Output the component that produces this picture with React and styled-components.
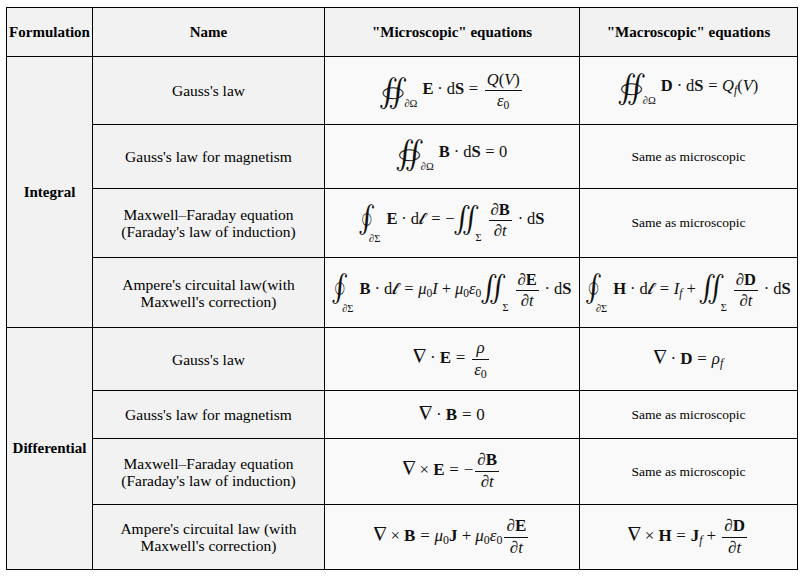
import React from "react";
import styled, { createGlobalStyle } from "styled-components";

const Global = createGlobalStyle`
  html, body { margin: 0; padding: 0; background: #fff; }
  body { font-family: "Liberation Serif", serif; color: #000; }
`;

const Page = styled.div`
  padding: 7px 0 0 6px;
`;

const Table = styled.div`
  display: grid;
  width: max-content;
  grid-template-columns: 85px 231px 254px 217px;
  grid-template-rows: 48px 67px 63px 68px 69px 62px 47px 65px 64px;
  gap: 1px;
  padding: 1px;
  background: #000;
`;

const Cell = styled.div`
  display: flex;
  align-items: center;
  justify-content: center;
  text-align: center;
  background: ${(p) => (p.$light ? "#f9f9f9" : "#f2f2f2")};
  grid-row: ${(p) => (p.$span ? `span ${p.$span}` : "auto")};
  min-width: 0;
  font-family: "Liberation Serif", serif;
  color: #000;
`;

const Head = styled(Cell)`
  font-weight: bold;
  font-size: 15px;
`;

const Formulation = styled(Cell)`
  font-weight: bold;
  font-size: 15px;
`;

const Name = styled(Cell)`
  font-size: 15.5px;
  line-height: 17px;
`;

const Same = styled.span`
  font-size: 13.5px;
`;

const Eq = styled.span`
  display: inline-block;
  font-family: "Liberation Serif", "FreeSerif", serif;
  font-size: ${(p) => p.$size || 16.5}px;
  line-height: 1.2;
  white-space: nowrap;
  color: #111;
`;

const V = styled.span`
  font-weight: bold;
`;

const It = styled.span`
  font-style: italic;
`;

const BI = styled.span`
  font-family: "FreeSerif", serif;
  font-weight: bold;
  font-style: italic;
`;

const Bin = styled.span`
  padding: 0 0.24em;
`;

const Rel = styled.span`
  padding: 0 0.28em;
`;

const Sub = styled.span`
  font-size: 0.7em;
  vertical-align: -0.25em;
  line-height: 0;
`;

const Frac = styled.span`
  display: inline-flex;
  flex-direction: column;
  align-items: stretch;
  vertical-align: middle;
  margin: 0 0.12em;
  line-height: 1.1;
  text-align: center;
`;

const Num = styled.span`
  padding: 0 0.12em 1px;
`;

const Den = styled.span`
  padding: 1px 0.12em 0;
  border-top: 1px solid #111;
`;

const Int = styled.span`
  display: inline-block;
  font-family: "FreeSerif", "DejaVu Serif", serif;
  font-size: ${(p) => p.$size}px;
  font-weight: normal;
  line-height: 1;
  vertical-align: middle;
  letter-spacing: ${(p) => p.$ls || 0}px;
  transform: translateY(${(p) => p.$dy || 0}px) scaleY(${(p) => p.$sy || 1.3});
`;

const Lim = styled.span`
  display: inline-block;
  font-size: 10.5px;
  line-height: 1;
  vertical-align: ${(p) => p.$va};
  margin-right: ${(p) => p.$mr || 4}px;
`;

const Grad = styled.span`
  font-family: "FreeSerif", serif;
  font-size: 1.22em;
  line-height: 1;
`;

const eps0 = (
  <>
    <It>ε</It>
    <Sub>0</Sub>
  </>
);
const mu0 = (
  <>
    <It>μ</It>
    <Sub>0</Sub>
  </>
);

const dS = (
  <>
    d<V>S</V>
  </>
);
const dl = (
  <>
    d<BI>ℓ</BI>
  </>
);

const dOver = (sym) => (
  <Frac>
    <Num>
      ∂<V>{sym}</V>
    </Num>
    <Den>
      ∂<It>t</It>
    </Den>
  </Frac>
);

const Surface = ({ children }) => (
  <>
    <Int $size={26} $sy={1.35} $ls={-2}>∯</Int>
    <Lim $va="-13px" $mr={5}>∂Ω</Lim>
    {children}
  </>
);

const Line = () => (
  <>
    <Int $size={24} $sy={1.4} $dy={-3} $ls={-5}>∮</Int>
    <Lim $va="-18px" $mr={6}>∂Σ</Lim>
  </>
);

const Dbl = () => (
  <>
    <Int $size={24} $sy={1.4} $dy={-3} $ls={-3}>∬</Int>
    <Lim $va="-17px" $mr={5}>Σ</Lim>
  </>
);

export default function App() {
  return (
    <>
      <Global />
      <Page>
        <Table>
          <Head>Formulation</Head>
          <Head>Name</Head>
          <Head>"Microscopic" equations</Head>
          <Head>"Macroscopic" equations</Head>

          <Formulation $span={4}>Integral</Formulation>
          <Name>Gauss's law</Name>
          <Cell $light>
            <Eq>
              <Surface>
                <V>E</V>
                <Bin>·</Bin>
                {dS}
                <Rel>=</Rel>
                <Frac>
                  <Num>
                    <It>Q</It>(<It>V</It>)
                  </Num>
                  <Den>{eps0}</Den>
                </Frac>
              </Surface>
            </Eq>
          </Cell>
          <Cell $light>
            <Eq>
              <Surface>
                <V>D</V>
                <Bin>·</Bin>
                {dS}
                <Rel>=</Rel>
                <It>Q</It>
                <Sub>
                  <It>f</It>
                </Sub>
                (<It>V</It>)
              </Surface>
            </Eq>
          </Cell>

          <Name>Gauss's law for magnetism</Name>
          <Cell $light>
            <Eq>
              <Surface>
                <V>B</V>
                <Bin>·</Bin>
                {dS}
                <Rel>=</Rel>0
              </Surface>
            </Eq>
          </Cell>
          <Cell $light>
            <Same>Same as microscopic</Same>
          </Cell>

          <Name>
            Maxwell–Faraday equation
            <br />
            (Faraday's law of induction)
          </Name>
          <Cell $light>
            <Eq>
              <Line />
              <V>E</V>
              <Bin>·</Bin>
              {dl}
              <Rel>=</Rel>−<Dbl />
              {dOver("B")}
              <Bin>·</Bin>
              {dS}
            </Eq>
          </Cell>
          <Cell $light>
            <Same>Same as microscopic</Same>
          </Cell>

          <Name>
            Ampere's circuital law(with
            <br />
            Maxwell's correction)
          </Name>
          <Cell $light>
            <Eq>
              <Line />
              <V>B</V>
              <Bin>·</Bin>
              {dl}
              <Rel>=</Rel>
              {mu0}
              <It>I</It>
              <Bin>+</Bin>
              {mu0}
              {eps0}
              <Dbl />
              {dOver("E")}
              <Bin>·</Bin>
              {dS}
            </Eq>
          </Cell>
          <Cell $light>
            <Eq>
              <Line />
              <V>H</V>
              <Bin>·</Bin>
              {dl}
              <Rel>=</Rel>
              <It>I</It>
              <Sub>
                <It>f</It>
              </Sub>
              <Bin>+</Bin>
              <Dbl />
              {dOver("D")}
              <Bin>·</Bin>
              {dS}
            </Eq>
          </Cell>

          <Formulation $span={4}>Differential</Formulation>
          <Name>Gauss's law</Name>
          <Cell $light>
            <Eq $size={17}>
              <Grad>∇</Grad>
              <Bin>·</Bin>
              <V>E</V>
              <Rel>=</Rel>
              <Frac>
                <Num>
                  <It>ρ</It>
                </Num>
                <Den>{eps0}</Den>
              </Frac>
            </Eq>
          </Cell>
          <Cell $light>
            <Eq $size={17}>
              <Grad>∇</Grad>
              <Bin>·</Bin>
              <V>D</V>
              <Rel>=</Rel>
              <It>ρ</It>
              <Sub>
                <It>f</It>
              </Sub>
            </Eq>
          </Cell>

          <Name>Gauss's law for magnetism</Name>
          <Cell $light>
            <Eq $size={17}>
              <Grad>∇</Grad>
              <Bin>·</Bin>
              <V>B</V>
              <Rel>=</Rel>0
            </Eq>
          </Cell>
          <Cell $light>
            <Same>Same as microscopic</Same>
          </Cell>

          <Name>
            Maxwell–Faraday equation
            <br />
            (Faraday's law of induction)
          </Name>
          <Cell $light>
            <Eq $size={17}>
              <Grad>∇</Grad>
              <Bin>×</Bin>
              <V>E</V>
              <Rel>=</Rel>−{dOver("B")}
            </Eq>
          </Cell>
          <Cell $light>
            <Same>Same as microscopic</Same>
          </Cell>

          <Name>
            Ampere's circuital law (with
            <br />
            Maxwell's correction)
          </Name>
          <Cell $light>
            <Eq $size={17}>
              <Grad>∇</Grad>
              <Bin>×</Bin>
              <V>B</V>
              <Rel>=</Rel>
              {mu0}
              <V>J</V>
              <Bin>+</Bin>
              {mu0}
              {eps0}
              {dOver("E")}
            </Eq>
          </Cell>
          <Cell $light>
            <Eq $size={17}>
              <Grad>∇</Grad>
              <Bin>×</Bin>
              <V>H</V>
              <Rel>=</Rel>
              <V>J</V>
              <Sub>
                <It>f</It>
              </Sub>
              <Bin>+</Bin>
              {dOver("D")}
            </Eq>
          </Cell>
        </Table>
      </Page>
    </>
  );
}
